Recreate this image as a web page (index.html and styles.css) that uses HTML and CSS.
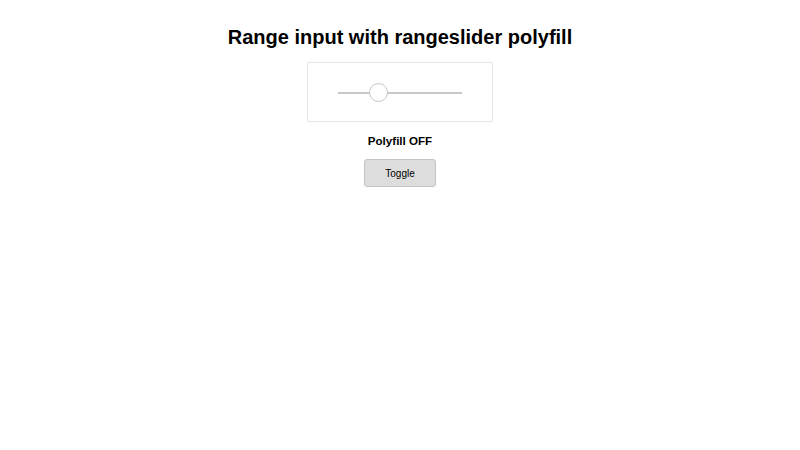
FILE: index.html
```html
<!DOCTYPE html>
<html>
<head>
<meta charset="utf-8">
<link rel="stylesheet" href="styles.css">
</head>
<body>
<main class="page">
  <h1 class="title">Range input with rangeslider polyfill</h1>
  <div class="box">
    <div class="slider">
      <div class="track"></div>
      <div class="thumb"></div>
    </div>
  </div>
  <p class="status">Polyfill OFF</p>
  <button class="toggle">Toggle</button>
</main>
</body>
</html>
```
FILE: styles.css
```css
html, body { margin: 0; padding: 0; background: #fff; }
body { font-family: "Liberation Sans", Arial, sans-serif; color: #000; }
.page { display: flex; flex-direction: column; align-items: center; padding-top: 25px; }
.title { font-size: 20px; font-weight: bold; margin: 0; line-height: 24px; }
.box { margin-top: 13px; width: 184px; height: 58px; border: 1px solid #e6e6e6; border-radius: 2px; display: flex; align-items: center; justify-content: center; }
.slider { position: relative; width: 124px; height: 20px; }
.track { position: absolute; left: 0; right: 0; top: 10px; height: 2px; background: #c8c8c8; }
.thumb { position: absolute; left: 31px; top: 1px; width: 17px; height: 17px; border: 1px solid #c8c8c8; border-radius: 50%; background: #fff; }
.status { margin: 12px 0 0; font-size: 11.6px; font-weight: bold; line-height: 14px; }
.toggle { margin-top: 11px; width: 72px; height: 28px; font-family: "Liberation Sans", Arial, sans-serif; font-size: 10px; background: #dddddd; border: 1px solid #c4c4c4; border-radius: 3px; color: #000; padding: 0; }
```
